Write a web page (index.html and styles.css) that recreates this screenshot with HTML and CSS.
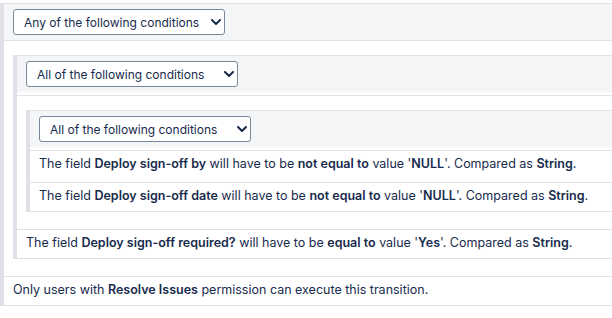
FILE: index.html
```html
<!DOCTYPE html>
<html lang="en">
<head>
    <meta charset="UTF-8">
    <meta name="viewport" content="width=device-width, initial-scale=1.0">
    <title>Transition Conditions</title>
    <link rel="stylesheet" href="styles.css">
</head>
<body>
    <div class="group outer">
        <div class="group-head">
            <span class="select-wrap">
                <select class="mode">
                    <option>Any of the following conditions</option>
                    <option>All of the following conditions</option>
                </select>
                <svg class="chevron" width="10" height="6" viewBox="0 0 10 6"><path d="M1 1l4 4 4-4" fill="none" stroke="#172b4d" stroke-width="2" stroke-linecap="round" stroke-linejoin="round"/></svg>
            </span>
        </div>
        <ul class="cond-list">
            <li class="item sub">
                <div class="group">
                    <div class="group-head">
                        <span class="select-wrap">
                            <select class="mode">
                                <option>All of the following conditions</option>
                                <option>Any of the following conditions</option>
                            </select>
                            <svg class="chevron" width="10" height="6" viewBox="0 0 10 6"><path d="M1 1l4 4 4-4" fill="none" stroke="#172b4d" stroke-width="2" stroke-linecap="round" stroke-linejoin="round"/></svg>
                        </span>
                    </div>
                    <ul class="cond-list">
                        <li class="item sub">
                            <div class="group">
                                <div class="group-head">
                                    <span class="select-wrap">
                                        <select class="mode">
                                            <option>All of the following conditions</option>
                                            <option>Any of the following conditions</option>
                                        </select>
                                        <svg class="chevron" width="10" height="6" viewBox="0 0 10 6"><path d="M1 1l4 4 4-4" fill="none" stroke="#172b4d" stroke-width="2" stroke-linecap="round" stroke-linejoin="round"/></svg>
                                    </span>
                                </div>
                                <ul class="cond-list">
                                    <li class="item">The field <b>Deploy sign-off by</b> will have to be <b>not equal to</b> value '<b>NULL</b>'. Compared as <b>String</b>.</li>
                                    <li class="item">The field <b>Deploy sign-off date</b> will have to be <b>not equal to</b> value '<b>NULL</b>'. Compared as <b>String</b>.</li>
                                </ul>
                            </div>
                        </li>
                        <li class="item">The field <b>Deploy sign-off required?</b> will have to be <b>equal to</b> value '<b>Yes</b>'. Compared as <b>String</b>.</li>
                    </ul>
                </div>
            </li>
            <li class="item">Only users with <b>Resolve Issues</b> permission can execute this transition.</li>
        </ul>
    </div>
</body>
</html>
```

FILE: styles.css
```css
body {
    margin: 0;
    padding-top: 3px;
    font-family: Inter, "Liberation Sans", sans-serif;
    font-size: 12.5px;
    color: #172b4d;
    background-color: #fff;
}

b {
    font-weight: 600;
}

.group {
    border-left: 4px solid #dfe1e6;
    border-top: 1px solid #dfe1e6;
    border-bottom: 1px solid #dfe1e6;
}

.group-head {
    background-color: #f4f5f7;
    height: 36px;
    box-sizing: border-box;
    padding: 5px 9px 5px;
    margin-bottom: 3px;
}

.outer > .group-head {
    margin-bottom: 0;
}

.select-wrap {
    position: relative;
    display: inline-block;
}

.mode {
    appearance: none;
    -webkit-appearance: none;
    width: 212px;
    height: 26px;
    margin: 0;
    padding: 0 18px 0 10px;
    border: 1px solid #7a869a;
    border-radius: 3px;
    background-color: #fff;
    color: #172b4d;
    font-family: inherit;
    font-size: 12px;
    display: block;
}

.chevron {
    position: absolute;
    right: 4px;
    top: 10px;
    pointer-events: none;
}

.cond-list {
    list-style: none;
    margin: 0;
    padding: 0;
}

.item {
    border-top: 1px solid #dfe1e6;
    padding: 5px 9px 7px;
    line-height: 16px;
    white-space: nowrap;
}

.item + .item {
    margin-top: 3px;
}

.item.sub {
    padding: 14px 0 14px 9px;
}

.cond-list > .item:first-child {
    border-top: none;
}

.group-head + .cond-list > .item:first-child {
    border-top: 1px solid #dfe1e6;
}
```
